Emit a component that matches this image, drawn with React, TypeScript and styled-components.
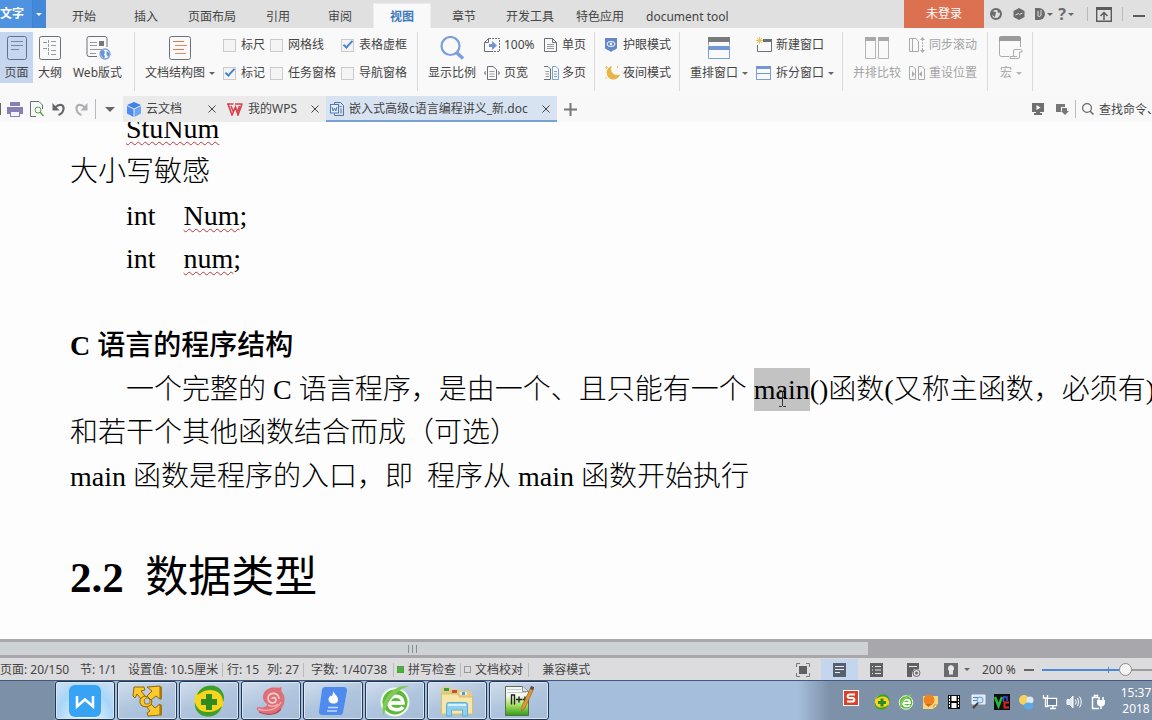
import React from 'react';
import styled, { createGlobalStyle, css } from 'styled-components';

const GlobalStyle = createGlobalStyle`
  *, *::before, *::after { box-sizing: border-box; }
  html, body { margin: 0; padding: 0; }
  body {
    font-family: "Noto Sans", "Noto Sans CJK SC", sans-serif;
    font-size: 12px;
    line-height: 16px;
    color: #444;
    overflow: hidden;
  }
  button, input { font: inherit; color: inherit; }
  button { border: 0; padding: 0; background: none; white-space: nowrap; }
  svg { display: block; flex: none; }
`;

const Window = styled.div`
  display: flex;
  flex-direction: column;
  height: 100vh;
  overflow: hidden;
  background: #f9f9f9;
`;

/* ---------- title bar ---------- */

const TitleBar = styled.header`
  display: flex;
  flex: none;
  height: 28px;
  background: #e0e0e1;
`;

const AppButton = styled.button`
  display: flex;
  align-items: center;
  width: 46px;
  margin-right: 5px;
  background: linear-gradient(90deg, #4f92e0 32px, #3f82d2 32px, #4489d8 34px);
  color: #fff;
  font-weight: 700;
  overflow: hidden;
`;

const AppName = styled.span`
  width: 36px;
  text-align: left;
`;

const TabNav = styled.nav`
  display: flex;
  align-items: flex-end;
  gap: 4px;
  padding-left: 4px;
`;

const MenuTab = styled.button<{ $active?: boolean }>`
  height: 25px;
  min-width: 58px;
  padding: 2px 9px 0;
  color: #444;
  ${(p) =>
    p.$active &&
    css`
      background: #f9f9f9;
      border: 1px solid #ececec;
      border-bottom: 0;
      color: #3d78bd;
      font-weight: 700;
    `}
`;

const TitleActions = styled.div`
  display: flex;
  align-items: center;
  margin-left: auto;
  height: 28px;
  padding-right: 7px;
`;

const LoginButton = styled.button`
  width: 80px;
  height: 28px;
  margin-right: 5px;
  background: #dc7152;
  color: #fff;
`;

const TitleIcon = styled.button<{ $w?: number }>`
  display: flex;
  align-items: center;
  justify-content: center;
  gap: 2px;
  width: ${(p) => p.$w ?? 24}px;
  height: 24px;
  color: #6a6b6d;
  font-weight: 700;
  font-size: 16px;
`;

const Divider = styled.span<{ $h?: number; $gap?: number }>`
  flex: none;
  width: 1px;
  height: ${(p) => p.$h ?? 14}px;
  margin: 0 ${(p) => p.$gap ?? 4}px;
  background: #b9babc;
`;

/* ---------- ribbon ---------- */

const Ribbon = styled.section`
  display: flex;
  flex: none;
  padding: 4px 0 5px;
  overflow: hidden;
`;

const Group = styled.div<{ $pad?: string }>`
  display: flex;
  flex: none;
  gap: 8px;
  height: 59px;
  padding: ${(p) => p.$pad ?? '0 8px 0 10px'};
  border-right: 1px solid #dadada;
`;

const ViewButtons = styled.div`
  display: flex;
`;

const BigButton = styled.button<{ $w: number; $active?: boolean; $muted?: boolean }>`
  display: flex;
  flex-direction: column;
  align-items: center;
  gap: 5px;
  width: ${(p) => p.$w}px;
  height: 51px;
  padding-top: 4px;
  background: ${(p) => (p.$active ? '#c6d6ee' : 'transparent')};
  color: ${(p) => (p.$muted ? '#a3a3a3' : '#444')};
`;

const LabelLine = styled.span`
  display: flex;
  align-items: center;
  gap: 4px;
  line-height: 16px;
`;

const SmallGrid = styled.div<{ $cols: string }>`
  display: grid;
  grid-template-columns: ${(p) => p.$cols};
  grid-template-rows: 24px 24px;
  row-gap: 4px;
  padding-top: 1px;
`;

const SmallButton = styled.button<{ $slot: number; $muted?: boolean }>`
  display: grid;
  grid-template-columns: ${(p) => p.$slot}px auto;
  align-items: center;
  justify-content: start;
  text-align: left;
  color: ${(p) => (p.$muted ? '#a3a3a3' : '#444')};
`;

const CheckLabel = styled.label`
  display: flex;
  align-items: center;
  gap: 5px;
  white-space: nowrap;
`;

const CheckBox = styled.input`
  appearance: none;
  display: grid;
  place-items: center;
  flex: none;
  width: 13px;
  height: 13px;
  margin: 0;
  border: 1px solid #cbcbcb;
  background: #f4f4f4;
  &:checked::after {
    content: '';
    width: 10px;
    height: 5px;
    margin-bottom: 3px;
    border: solid #4285d6;
    border-width: 0 0 2px 2px;
    transform: rotate(-47deg);
  }
`;

const Caret = styled.span<{ $size?: number; $color?: string }>`
  flex: none;
  border: ${(p) => p.$size ?? 3}px solid transparent;
  border-top-color: ${(p) => p.$color ?? '#666'};
  border-bottom: 0;
`;

/* ---------- quick access and document tabs ---------- */

const QuickBar = styled.div`
  display: flex;
  align-items: center;
  flex: none;
  height: 26px;
  background: #f8f8f8;
`;

const QuickTools = styled.div`
  display: flex;
  align-items: center;
  width: 123px;
  overflow: hidden;
`;

const QuickButton = styled.button<{ $w?: number }>`
  display: flex;
  align-items: center;
  justify-content: center;
  flex: none;
  width: ${(p) => p.$w ?? 22}px;
  height: 24px;
`;

const DocTab = styled.div<{ $w: number; $active?: boolean }>`
  display: flex;
  align-items: center;
  gap: 5px;
  width: ${(p) => p.$w}px;
  height: 26px;
  padding: 2px 5px 0 4px;
  border-bottom: 2px solid ${(p) => (p.$active ? '#7a9fd2' : '#ebebec')};
  background: ${(p) => (p.$active ? '#d8e3f1' : '#ebebec')};
  white-space: nowrap;
`;

const DocTabName = styled.button`
  flex: 1;
  text-align: left;
`;

const CloseButton = styled.button`
  display: flex;
  padding: 2px;
`;

const QuickRight = styled.div`
  display: flex;
  align-items: center;
  margin-left: auto;
`;

const SearchLabel = styled.label`
  display: flex;
  align-items: center;
  gap: 5px;
  padding-left: 2px;
`;

const SearchInput = styled.input`
  width: 53px;
  height: 20px;
  padding: 0;
  border: 0;
  outline: 0;
  background: transparent;
  &::placeholder {
    color: #444;
    opacity: 1;
  }
`;

/* ---------- document ---------- */

const Page = styled.main`
  flex: 1;
  min-height: 0;
  overflow: hidden;
  padding-left: 70px;
  background: #fdfdfd;
  color: #000;
  font-family: "Liberation Serif", "Noto Sans CJK SC", serif;
  font-size: 28px;
  font-weight: 300;
  line-height: 43px;
  white-space: pre;
`;

const Content = styled.article`
  margin-top: -15px;
`;

const Para = styled.p<{ $indent?: boolean }>`
  height: 43px;
  margin: 0;
  padding-left: ${(p) => (p.$indent ? 56 : 0)}px;
`;

const Section = styled.section`
  padding-top: 1px;
`;

const SubHeading = styled.h3`
  margin: 44px 0 1px;
  height: 43px;
  font-size: 28px;
  font-weight: 500;
  b { font-weight: 700; }
`;

const Heading = styled.h2`
  margin: 48px 0 0;
  font-size: 43px;
  line-height: 64px;
  font-weight: 400;
  b { font-weight: 700; }
`;

const Misspelled = styled.span`
  text-decoration: underline wavy #b8383c 1px;
  text-decoration-skip-ink: none;
  text-underline-offset: 3px;
`;

const Selection = styled.mark`
  position: relative;
  display: inline-block;
  height: 43px;
  vertical-align: top;
  background: #c3c3c3;
  color: #000;
`;

const Pointer = styled.svg`
  position: absolute;
  left: 25px;
  top: 22px;
`;

/* ---------- scroll and status bars ---------- */

const ScrollTrack = styled.div`
  flex: none;
  height: 19px;
  padding: 3px 0;
  background: #a8a8ac;
`;

const ScrollThumb = styled.div`
  display: flex;
  align-items: center;
  justify-content: center;
  gap: 3px;
  width: calc(100% - 284px);
  height: 13px;
  padding-right: 44px;
  background: #cfd2d4;
`;

const Grip = styled.span`
  width: 1px;
  height: 8px;
  background: #8b8d90;
`;

const StatusBar = styled.footer`
  display: flex;
  align-items: center;
  flex: none;
  height: 23px;
  padding-top: 1px;
  border-bottom: 1px solid #3f5a7d;
  background: #dcdbde;
  white-space: nowrap;
`;

const StatusItem = styled.span<{ $w: number }>`
  display: flex;
  align-items: center;
  gap: 4px;
  flex: none;
  width: ${(p) => p.$w}px;
`;

const StatusDot = styled.span<{ $on?: boolean }>`
  width: 7px;
  height: 7px;
  border: 1px solid ${(p) => (p.$on ? '#4aa53c' : '#999')};
  background: ${(p) => (p.$on ? '#4fae40' : 'transparent')};
`;

const StatusRight = styled.div`
  display: flex;
  align-items: center;
  margin-left: auto;
`;

const ViewMode = styled.button<{ $active?: boolean; $w?: number }>`
  display: flex;
  align-items: center;
  justify-content: center;
  gap: 6px;
  width: ${(p) => p.$w ?? 37}px;
  height: 21px;
  background: ${(p) => (p.$active ? '#c4d5ee' : 'transparent')};
`;

const ZoomValue = styled.span`
  width: 42px;
`;

const ZoomSlider = styled.input`
  appearance: none;
  width: 110px;
  height: 14px;
  margin: 0 0 0 8px;
  background:
    linear-gradient(#4a8ad6, #4a8ad6) 66px 4px / 1px 6px no-repeat,
    linear-gradient(90deg, #4a8ad6 80px, #9c9ca0 80px) 0 6px / 100% 2px no-repeat;
  &::-webkit-slider-thumb {
    appearance: none;
    width: 13px;
    height: 13px;
    border: 1px solid #8b8b8e;
    border-radius: 50%;
    background: #f4f4f4;
  }
`;

/* ---------- taskbar ---------- */

const Taskbar = styled.nav`
  display: flex;
  flex: none;
  height: 39px;
  background: linear-gradient(90deg, #7c90a7 54px, #a5bedb 56px, #a5bedb calc(100% - 354px), #7d91a8 calc(100% - 322px));
`;

const TaskButtons = styled.div`
  display: flex;
  gap: 2px;
  padding-left: 55px;
`;

const TaskButton = styled.button<{ $active?: boolean }>`
  display: flex;
  align-items: center;
  justify-content: center;
  width: 60px;
  height: 39px;
  border: 1px solid #22364f;
  border-radius: 3px;
  box-shadow: inset 0 0 0 1px #dbe6f3;
  background: ${(p) =>
    p.$active
      ? 'radial-gradient(circle at 50% 100%, #eaf8ff 10%, #a9d4f6 60%, #cfe2f6)'
      : 'linear-gradient(160deg, #cbd9ea 10%, #b0c5de 50%, #a5bcd8)'};
`;

const Tray = styled.div`
  display: flex;
  align-items: center;
  margin-left: auto;
`;

const TrayIcon = styled.button<{ $raised?: boolean }>`
  display: flex;
  align-items: center;
  justify-content: center;
  width: ${(p) => (p.$raised ? 38 : 24)}px;
  height: 24px;
  margin-bottom: ${(p) => (p.$raised ? 5 : 0)}px;
  margin-top: ${(p) => (p.$raised ? 0 : 2)}px;
`;

const Clock = styled.time`
  width: 42px;
  padding-left: 10px;
  color: #fff;
  text-align: center;
`;

/* ---------- icons ---------- */

const Svg = ({ w, h = w, children }: { w: number; h?: number; children: React.ReactNode }) => (
  <svg width={w} height={h} viewBox={`0 0 ${w} ${h}`} fill="none" aria-hidden="true">
    {children}
  </svg>
);

const G = '#6b7078';
const B = '#7a9fdb';

const PageIcon = () => (
  <Svg w={20} h={24}>
    <rect x=".5" y=".5" width="19" height="23" rx="2" stroke="#5f7390" />
    <path d="M4 5.500h12M4 9.500h12M4 13.500h8" stroke="#7489a8" />
  </Svg>
);
const OutlineIcon = () => (
  <Svg w={22} h={24}>
    <rect x=".5" y=".5" width="21" height="23" rx="2" stroke={G} />
    <path d="M9.500 4v15" stroke="#999" strokeDasharray="3 1" />
    <path d="M4 6.500h4M4 12.500h4M12 5.500h5M12 9.500h5M12 14.500h5M12 18.500h5" stroke="#999" />
  </Svg>
);
const WebIcon = () => (
  <Svg w={26} h={24}>
    <path d="M12 20.500H4a2 2 0 0 1-2-2V2.500a2 2 0 0 1 2-2h16a2 2 0 0 1 2 2V11" stroke={G} />
    <path d="M5 6.500h7M5 9.500h7M5 13.500h12M5 17.500h6" stroke="#999" />
    <rect x="14" y="5" width="5" height="5" fill="#777" />
    <circle cx="20" cy="18" r="5" fill="#f4f8ff" stroke={B} strokeWidth="1.300" />
    <path d="M15.500 15.500l3-1.500 1.500 2-1 2.500 1 2-1 2-3-3zM21.500 15l3 2-1 4-2-2z" fill="#6b93d2" />
  </Svg>
);
const MapIcon = () => (
  <Svg w={22} h={24}>
    <rect x=".5" y=".5" width="21" height="23" rx="2" stroke={G} />
    <path d="M4 5.500h11M4 13.500h11" stroke="#d97b4c" />
    <path d="M6 9.500h12M6 17.500h11" stroke="#d98e68" />
  </Svg>
);
const MagnifierIcon = () => (
  <Svg w={26} h={24}>
    <circle cx="11.500" cy="10" r="9" stroke={B} strokeWidth="2.200" />
    <path d="M17.500 16.500l6.500 6" stroke={B} strokeWidth="3.500" />
  </Svg>
);
const ActualSizeIcon = () => (
  <Svg w={17} h={16}>
    <path d="M7 1.500H4.500L.5 5.500v9H7" stroke={G} />
    <path d="M.5 5.500h4v-4" stroke={G} />
    <path d="M8 1.500h7.500v13H7" stroke={G} strokeDasharray="2 1" />
    <path d="M5 7h3V4L13 8.500 8 13v-3H5z" fill="#6f95d6" />
  </Svg>
);
const PageWidthIcon = () => (
  <Svg w={17} h={16}>
    <path d="M3.500 1.500H9l3.500 3v10h-9z" stroke={G} />
    <path d="M5.500 6.500h5M5.500 9h5M5.500 11.500h5" stroke="#999" />
    <path d="M1.500 6v4L0 8zM14.500 6v4L16 8z" fill="#888" stroke="#888" strokeWidth=".5" />
  </Svg>
);
const SinglePageIcon = () => (
  <Svg w={14} h={16}>
    <path d="M.5 1.500h8l4 4v9H.5zM8.500 1.500v4h4" stroke={G} />
    <path d="M3 7.500h7M3 9.500h7M3 11.500h7" stroke="#999" />
  </Svg>
);
const MultiPageIcon = () => (
  <Svg w={16} h={16}>
    <path d="M-.5 1.500H4L6.500 4v10.500h-7" stroke={G} />
    <path d="M8.500 1.500H12l2.500 2.500v10.500h-6z" stroke={B} />
    <path d="M1.500 6.500H5M1.500 9H5M1.500 11.500H5" stroke="#999" />
    <path d="M10 6.500h3M10 9h3M10 11.500h3" stroke={B} />
  </Svg>
);
const EyeShieldIcon = () => (
  <Svg w={12} h={14}>
    <path d="M0 0h12v10c-1 2-3 1.500-6 4-3-2.500-5-2-6-4z" fill="#6488cc" />
    <ellipse cx="6" cy="6" rx="4" ry="2.500" stroke="#fff" />
    <circle cx="6" cy="6" r="1.200" fill="#fff" />
  </Svg>
);
const MoonIcon = () => (
  <Svg w={16} h={16}>
    <path d="M7 1a5.800 5.800 0 1 0 8 8.500A6.800 6.800 0 1 1 7 1z" fill="#ebb545" />
    <path d="M7 1C4 6 9 12 15 9.500 12 16 3 16 2 9 2 5 4 2 7 1z" fill="#ebb545" />
    <path d="M1.500 1v3M0 2.500h3M12.500 1v2M0 13.500l2-1" stroke="#f0c766" />
  </Svg>
);
const ArrangeIcon = () => (
  <Svg w={22} h={24}>
    <path d="M0 1h22v5H0z" fill="#7a7a7c" />
    <path d="M.5 6v3.500M21.500 6v3.500" stroke="#999" />
    <path d="M0 10h22v4H0z" fill="#7398d6" />
    <path d="M.5 14v8.500h21V14" stroke={B} />
  </Svg>
);
const NewWindowIcon = () => (
  <Svg w={17} h={16}>
    <path d="M1.500 8v6.500h14V3" stroke={G} />
    <path d="M7 2h9v3H7z" fill={G} />
    <path d="M3.500 0v7M0 3.500h7M1 1l5 5M6 1L1 6" stroke="#edc15d" />
  </Svg>
);
const SplitWindowIcon = () => (
  <Svg w={15} h={16}>
    <rect x=".5" y="1.500" width="14" height="13" stroke={B} />
    <path d="M0 2.500h15" stroke="#7398d6" strokeWidth="3" />
    <path d="M0 8.500h15" stroke="#7398d6" />
  </Svg>
);
const SideBySideIcon = () => (
  <Svg w={24} h={24}>
    <path d="M.5 1.500h10v21H.5zM13.500 1.500h10v21h-10z" stroke="#b5b5b5" />
    <path d="M0 1h11v4H0zM13 1h11v4H13z" fill="#a8a8a8" />
  </Svg>
);
const SyncScrollIcon = () => (
  <Svg w={16} h={16}>
    <path d="M4.500 14.500h-4v-13H4" stroke="#ababab" />
    <path d="M3.500 1.500H7l2.500 3v10h-6z" stroke="#ababab" />
    <path d="M13.500 2v12" stroke="#ababab" strokeDasharray="2 1" />
    <path d="M13.500 0L16 3h-5zM13.500 16l2.500-3h-5z" fill="#ababab" />
  </Svg>
);
const ResetIcon = () => (
  <Svg w={16} h={16}>
    <path d="M.5 1.500H4L6.500 4v10.500h-6zM9.500 1.500H13L15.500 4v10.500h-6z" stroke="#ababab" />
    <path d="M3 6v6l3-3zM13 6v6l-3-3z" fill="#ababab" />
  </Svg>
);
const MacroIcon = () => (
  <Svg w={24} h={24}>
    <path d="M10 20.500H2.500a2 2 0 0 1-2-2V2M21.500 2v9" stroke="#ababab" />
    <path d="M0 2a2 2 0 0 1 2-2h18a2 2 0 0 1 2 2v3H0z" fill="#9b9b9b" />
    <path d="M14.500 20v-5a1.500 1.500 0 0 1 1.500-1.500h5.500a1.500 1.500 0 0 1 1.500 1.500v1h-2.500v5a1.500 1.500 0 0 1-1.500 1.500h-8v-2h7" stroke="#ababab" fill="#f9f9f9" />
  </Svg>
);

const PrinterIcon = () => (
  <Svg w={16} h={15}>
    <path d="M3 0h10v4H3zM0 5h16v7h-3V9H3v3H0z" fill="#8780b5" />
    <rect x="3.500" y="9.500" width="9" height="5" fill="#f3f3f8" stroke="#8780b5" />
  </Svg>
);
const PreviewIcon = () => (
  <Svg w={14} h={16}>
    <path d="M6 15.500H.5V.5H9L12.500 4v4" stroke={G} />
    <circle cx="8" cy="9" r="3" stroke="#5aa24e" />
    <path d="M10 11l3.500 4" stroke="#5aa24e" strokeWidth="1.500" />
  </Svg>
);
const UndoIcon = ({ flip, color }: { flip?: boolean; color: string }) => (
  <Svg w={14} h={14}>
    <g transform={flip ? 'matrix(-1 0 0 1 14 0)' : undefined}>
      <path d="M3 5.500C8 1 12 3 11.500 7c-.3 3-2.500 5-5 6" stroke={color} strokeWidth="2.200" />
      <path d="M.5 1v7.500h7z" fill={color} />
    </g>
  </Svg>
);
const CubeIcon = () => (
  <Svg w={14} h={15}>
    <path d="M7 0l7 3-7 3.500L0 3z" fill="#3f82ea" />
    <path d="M0 4l6.500 3.200V15L0 11.500z" fill="#4b8df0" />
    <path d="M14 4L7.500 7.200V15L14 11.500z" fill="#6ca5f6" />
  </Svg>
);
const WpsIcon = () => (
  <Svg w={16} h={13}>
    <path d="M0 1h6.500M1 1l4 11 3.500-8 2.500 8 4-11M8 1h7.500M4 3l2.500 6M12.500 3L10.500 8.500" stroke="#d9424a" strokeWidth="1.600" />
  </Svg>
);
const DocIcon = () => (
  <Svg w={14} h={15}>
    <path d="M4.500 2V.5h6L13.500 3.500v10h-9v-2" stroke="#5a7396" />
    <path d="M11 6.500v5M9.500 4.500h2" stroke="#5a7396" />
    <rect x=".5" y="2.500" width="8" height="8.500" fill="#e6eefa" stroke="#4f78b6" />
    <path d="M2 5l1.200 4L4.500 6l1.300 3L7 5" stroke="#4f78b6" />
  </Svg>
);
const CloseIcon = () => (
  <Svg w={8}>
    <path d="M.5.5l7 7M7.500.5l-7 7" stroke="#444" />
  </Svg>
);
const PlusIcon = () => (
  <Svg w={13}>
    <path d="M6.500 0v13M0 6.500h13" stroke="#777" strokeWidth="2" />
  </Svg>
);
const PresentIcon = () => (
  <Svg w={12} h={12}>
    <path d="M0 0h12v9H8v1h2v2H2v-2h2V9H0z" fill="#707072" />
    <path d="M4.500 2v5L8.500 4.500z" fill="#fff" />
  </Svg>
);
const LayoutIcon = () => (
  <Svg w={13} h={12}>
    <path d="M0 1h9v3H5v5H0z" fill="#77777a" />
    <path d="M6 5h5v3h2l-4 4-4-4h1z" fill="#77777a" />
  </Svg>
);
const SearchIcon = () => (
  <Svg w={12}>
    <circle cx="5" cy="5" r="4.400" stroke="#666" strokeWidth="1.200" />
    <path d="M8 8l3.500 3.500" stroke="#666" strokeWidth="1.500" />
  </Svg>
);

const WAppIcon = () => (
  <Svg w={32}>
    <rect width="32" height="32" rx="6" fill="#36a3f4" />
    <path d="M8 11v10.500l8-7 8 7V11" stroke="#fff" strokeWidth="2.500" />
  </Svg>
);
const ArrowsAppIcon = () => (
  <Svg w={32}>
    <g stroke="#8f6606" strokeWidth="1" fill="#fbc92b">
      <path d="M3 2h10l1 3-4 1 4 5-4 3-4-5-2 4-2-2z" />
      <path d="M16 2l13-1v13l-4-3-5 4-4-4 5-5z" />
      <path d="M15 21l4-3 5 5 5-4v11l-12 1-1-3 3-2z" />
      <path d="M9 14l4-3 4 1 4 4-1 4-4 2-5-1-2-3z" />
    </g>
    <path d="M29 1l2 1v12l-2 1zM29 19l2 1v10l-2 1z" fill="#a87908" />
    <path d="M13 15l2-2h2l2 2v3l-2 1h-3z" fill="#b8cbe1" stroke="#8f6606" strokeWidth=".8" />
  </Svg>
);
const SafeAppIcon = ({ s = 32 }: { s?: number }) => (
  <svg width={s} height={s} viewBox="0 0 32 32" aria-hidden="true">
    <circle cx="16" cy="16" r="14.500" fill="#f7d41d" />
    <path d="M4 10C8-1 23-2 28 5c3 4 4 8 2 12C30 9 24 5 17 5 11 5 8 8 4 10z" fill="#3f9f2e" />
    <path d="M2 17c1 6 6 10 12 10 7 0 11-2 15-6-2 8-9 11-15 10.500C6 31 1 25 2 17z" fill="#3f9f2e" />
    <path d="M13 9h6v5h5v6h-5v5h-6v-5H8v-6h5z" fill="#2f8a1f" />
  </svg>
);
const ShellAppIcon = () => (
  <Svg w={32}>
    <path d="M27 2c-1 2-1 3 0 5 4 5 3 12-1 17-5 6-17 7-24 1-1-2 0-3 2-3 4 1 8 0 8-3-6-4-5-12 1-15 5-3 10 0 14-2z" fill="#dd7076" />
    <path d="M24 14c0-8-12-7-11 0 1 5 8 5 8 1 0-3-4-3-4-1" stroke="#f9cfd0" strokeWidth="1.600" />
    <path d="M3 24c9 3 19 1 23-7M13 20c4 2 8 1 10-1" stroke="#f2adb0" strokeWidth="1.400" />
    <path d="M4 27c8 4 17 3 22-3" stroke="#b8444c" strokeWidth="1.200" />
  </Svg>
);
const FlameAppIcon = () => (
  <Svg w={30} h={30}>
    <path d="M7 1h19a3 3 0 0 1 3 3.500l-4 22a3 3 0 0 1-3 2.500H4a3 3 0 0 1-3-3.500l3-22A3 3 0 0 1 7 1z" fill="#4f8bee" />
    <path d="M15 5c1 3 5 5 5 8.500s-2 4-4.500 4-5-1-5-4c0-2 1.500-3 2-4l1 1c1.500-1.500 1.500-3.500 1.500-5.500z" fill="#fff" />
    <path d="M10 21.500h10M9 25h10" stroke="#c7dcff" strokeWidth="1.500" />
  </Svg>
);
const BrowserIcon = ({ s = 32 }: { s?: number }) => (
  <svg width={s} height={s} viewBox="0 0 32 32" fill="none" aria-hidden="true">
    <circle cx="16" cy="17" r="13.500" fill="#5dba38" stroke="#f1faec" strokeWidth="2" />
    <path d="M10 18h14c0-9-14-9-14 0 0 8 11 8 14 4" stroke="#fff" strokeWidth="3.600" />
    <path d="M5 31C-1 20 12-1 30 1 20 4 8 13 5 31z" fill="#7fcb59" />
    <path d="M10 18h14" stroke="#fff" strokeWidth="3" />
  </svg>
);
const FolderAppIcon = () => (
  <Svg w={34} h={32}>
    <path d="M1 5l1-3h7l2 2h7l2 2h11l1 3v20H1z" fill="#e6cc80" />
    <path d="M4 3h5v3H4z" fill="#3e9b45" />
    <path d="M12 5h5v3h-5z" fill="#c3523a" />
    <path d="M20 7h7v3h-7z" fill="#e8eef4" />
    <path d="M22 7h3v3h-3z" fill="#5c9ccc" />
    <path d="M1.500 9h16l2 3h13v17h-31z" fill="#f6e6ab" stroke="#d9bf6c" />
    <path d="M6.500 31V19.500q0-2 2-2h17q2 0 2 2V31h-5v-6h-11v6z" fill="#8fd0ee" stroke="#5aaed6" />
    <path d="M8 20h18" stroke="#d5f0fb" strokeWidth="2" />
  </Svg>
);
const NotepadAppIcon = () => (
  <Svg w={30} h={32}>
    <defs>
      <linearGradient id="note" x1="0" y1="0" x2="0" y2="1">
        <stop offset=".3" stopColor="#f6f9f1" />
        <stop offset=".65" stopColor="#a5dc5e" />
        <stop offset="1" stopColor="#2f9a18" />
      </linearGradient>
    </defs>
    <path d="M1.500 1.500h17l6 5v24h-23z" fill="url(#note)" stroke="#5d6b55" />
    <path d="M18.500 1.500v5h6" fill="#dfe5ea" stroke="#8a9499" />
    <path d="M3 4.500h14M3 7.500h19" stroke="#c3cbd4" />
    <path d="M7.500 19.500V10h3v9.500M12 14.500h6M15 11.500v6M18.500 14.500h5M21 11.500v6" stroke="#222" strokeWidth="1.400" />
    <path d="M27 2l3 1-9 20-3.500 3 .5-5z" fill="#dc9a34" stroke="#8c5c20" strokeWidth=".6" />
    <path d="M27 1l3 1-1 3-3-1z" fill="#5a4a58" />
  </Svg>
);

/* ---------- data ---------- */

const menuTabs = ['开始', '插入', '页面布局', '引用', '审阅', '视图', '章节', '开发工具', '特色应用', 'document tool'];

const checks = [
  { label: '标尺', on: false },
  { label: '网格线', on: false },
  { label: '表格虚框', on: true },
  { label: '标记', on: true },
  { label: '任务窗格', on: false },
  { label: '导航窗格', on: false },
];

const tasks = [
  { name: 'WPS 文字', icon: <WAppIcon /> },
  { name: 'VMware', icon: <ArrowsAppIcon /> },
  { name: '360 安全卫士', icon: <SafeAppIcon /> },
  { name: 'Xshell', icon: <ShellAppIcon /> },
  { name: '笔记', icon: <FlameAppIcon /> },
  { name: '浏览器', icon: <BrowserIcon /> },
  { name: '资源管理器', icon: <FolderAppIcon /> },
  { name: 'Notepad++', icon: <NotepadAppIcon /> },
];

const trayIcons = [
  { name: '安全卫士', icon: <SafeAppIcon s={16} /> },
  { name: '浏览器', icon: <BrowserIcon s={16} /> },
  {
    name: '消息',
    icon: (
      <Svg w={16}>
        <path d="M1 2h15v9l-4 4H1z" fill="#f6d77c" />
        <path d="M16 11l-4 4v-4z" fill="#fff3c4" stroke="#8c6a1c" strokeWidth=".6" />
        <circle cx="7" cy="6" r="5.500" fill="#ec8426" />
        <path d="M3 10h7l-3.500 3z" fill="#d9661b" />
      </Svg>
    ),
  },
  {
    name: '视频',
    icon: (
      <Svg w={12} h={14}>
        <path d="M0 0h12v14H0z" fill="#111" />
        <path d="M3.500 1h5v5h-5zM3.500 8h5v5h-5z" fill="#fff" />
        <path d="M1.500 1v12M10.500 1v12" stroke="#fff" strokeDasharray="2 1" />
      </Svg>
    ),
  },
  {
    name: '搜索',
    icon: (
      <Svg w={15} h={15}>
        <path d="M1 1h13v9H1z" fill="#dce9f5" stroke="#eef" />
        <path d="M2 3.500h5M2 6.500h4" stroke="#4c86c4" />
        <circle cx="9" cy="6" r="3" fill="#cfe6fa" stroke="#6f9cc8" />
        <path d="M7 9l-5 5" stroke="#4a3a2c" strokeWidth="2" />
      </Svg>
    ),
  },
  {
    name: 'VNC',
    icon: (
      <Svg w={16}>
        <path d="M0 0h16v16H0z" fill="#101010" />
        <path d="M1 3l3.500 9L8 3" stroke="#28b83a" strokeWidth="2.500" />
        <path d="M9.500 8V3h3.500v4" stroke="#3a52d8" strokeWidth="1.500" />
        <path d="M15 8.500h-4.500v5H15" stroke="#d22" strokeWidth="2" />
      </Svg>
    ),
  },
  {
    name: '天气',
    icon: (
      <Svg w={16}>
        <circle cx="6" cy="6" r="5" fill="#f6d25c" />
        <circle cx="12" cy="6" r="3.500" fill="#dbe9f5" />
        <ellipse cx="10.500" cy="12" rx="5" ry="3.500" fill="#5aa9e8" />
      </Svg>
    ),
  },
  {
    name: '网络',
    icon: (
      <Svg w={16}>
        <path d="M5.500 4.500h9v7h-9zM8 14.500h6M11 12v2" stroke="#fff" strokeWidth="1.300" />
        <path d="M6 5h8v6H6z" fill="#6c8199" />
        <path d="M1.500 1v3h4V1M3.500 4v8.500h3" stroke="#fff" strokeWidth="1.300" />
      </Svg>
    ),
  },
  {
    name: '音量',
    icon: (
      <Svg w={16}>
        <path d="M1 5.500h2.500L7 2v12L3.500 10.500H1z" fill="#dfe6ee" stroke="#fff" />
        <path d="M9.500 5.500q1.500 2.500 0 5M11.500 4q2.500 4 0 8M13.500 2.500q3.500 5.500 0 11" stroke="#fff" />
      </Svg>
    ),
  },
  {
    name: '电源',
    icon: (
      <Svg w={16}>
        <path d="M9 14.500H2.500v-11H8M4.500 3.500v-2h3v2" stroke="#fff" strokeWidth="1.500" />
        <path d="M7 6h8v2.500a4 4 0 0 1-8 0z" fill="#fff" />
        <path d="M9 6V3M13 6V3M11 11v4" stroke="#fff" strokeWidth="1.500" />
      </Svg>
    ),
  },
];

/* ---------- page ---------- */

export default function App() {
  return (
    <Window>
      <GlobalStyle />
      <TitleBar>
        <AppButton>
          <AppName>文字</AppName>
          <Caret $color="#fff" />
        </AppButton>
        <TabNav>
          {menuTabs.map((t) => (
            <MenuTab key={t} $active={t === '视图'}>
              {t}
            </MenuTab>
          ))}
        </TabNav>
        <TitleActions>
          <LoginButton>未登录</LoginButton>
          <TitleIcon $w={14} aria-label="皮肤">
            <Svg w={12}>
              <circle cx="6" cy="6" r="5" stroke="#6a6b6d" strokeWidth="2" />
              <path d="M1 3l5 1-1 5-3-2zM7 1l4 3-3 1zM7 11l3-4 1 2z" fill="#6a6b6d" />
            </Svg>
          </TitleIcon>
          <TitleIcon $w={32} aria-label="服务">
            <Svg w={12}>
              <path d="M6 0l5.500 3v6L6 12 .5 9V3z" fill="#6a6b6d" />
              <path d="M2.500 7l3-1.500 1 1 3-1.500" stroke="#e0e0e1" />
            </Svg>
          </TitleIcon>
          <TitleIcon $w={18} aria-label="文档">
            <Svg w={10} h={12}>
              <path d="M0 0h4a6 6 0 0 1 0 12H0z" fill="#6a6b6d" />
              <path d="M3 3v5q2 2 3-1V2" stroke="#e0e0e1" />
            </Svg>
            <Caret />
          </TitleIcon>
          <TitleIcon $w={26} aria-label="帮助">
            ?<Caret />
          </TitleIcon>
          <Divider $gap={8} />
          <TitleIcon $w={16} aria-label="折叠功能区">
            <Svg w={16} h={15}>
              <path d="M.7 1v13.300h14.600V1" stroke="#5a5b5d" strokeWidth="1.400" />
              <path d="M0 0h16v3H0z" fill="#5a5b5d" />
              <path d="M8 5.500V13M4.500 9L8 5.500 11.500 9" stroke="#5a5b5d" strokeWidth="1.500" />
            </Svg>
          </TitleIcon>
          <Divider $gap={10} />
          <TitleIcon $w={12} aria-label="最小化">
            <Svg w={12} h={12}>
              <path d="M0 8h12" stroke="#5a5b5d" strokeWidth="2" />
            </Svg>
          </TitleIcon>
        </TitleActions>
      </TitleBar>

      <Ribbon>
        <Group $pad="0 6px 0 0">
          <ViewButtons>
            <BigButton $w={33} $active>
              <PageIcon />
              页面
            </BigButton>
            <BigButton $w={34}>
              <OutlineIcon />
              大纲
            </BigButton>
            <BigButton $w={61}>
              <WebIcon />
              Web版式
            </BigButton>
          </ViewButtons>
        </Group>
        <Group $pad="0 10px">
          <BigButton $w={70}>
            <MapIcon />
            <LabelLine>
              文档结构图
              <Caret />
            </LabelLine>
          </BigButton>
          <SmallGrid $cols="47px 71px 66px">
            {checks.map((c) => (
              <CheckLabel key={c.label}>
                <CheckBox type="checkbox" defaultChecked={c.on} />
                {c.label}
              </CheckLabel>
            ))}
          </SmallGrid>
        </Group>
        <Group>
          <BigButton $w={48}>
            <MagnifierIcon />
            显示比例
          </BigButton>
          <SmallGrid $cols="60px 42px">
            <SmallButton $slot={20}>
              <ActualSizeIcon />
              100%
            </SmallButton>
            <SmallButton $slot={18}>
              <SinglePageIcon />
              单页
            </SmallButton>
            <SmallButton $slot={20}>
              <PageWidthIcon />
              页宽
            </SmallButton>
            <SmallButton $slot={18}>
              <MultiPageIcon />
              多页
            </SmallButton>
          </SmallGrid>
        </Group>
        <Group>
          <SmallGrid $cols="66px">
            <SmallButton $slot={18}>
              <EyeShieldIcon />
              护眼模式
            </SmallButton>
            <SmallButton $slot={18}>
              <MoonIcon />
              夜间模式
            </SmallButton>
          </SmallGrid>
        </Group>
        <Group>
          <BigButton $w={58}>
            <ArrangeIcon />
            <LabelLine>
              重排窗口
              <Caret />
            </LabelLine>
          </BigButton>
          <SmallGrid $cols="78px">
            <SmallButton $slot={20}>
              <NewWindowIcon />
              新建窗口
            </SmallButton>
            <SmallButton $slot={20}>
              <SplitWindowIcon />
              <LabelLine>
                拆分窗口
                <Caret />
              </LabelLine>
            </SmallButton>
          </SmallGrid>
        </Group>
        <Group $pad="0 10px">
          <BigButton $w={48} $muted>
            <SideBySideIcon />
            并排比较
          </BigButton>
          <SmallGrid $cols="68px">
            <SmallButton $slot={20} $muted>
              <SyncScrollIcon />
              同步滚动
            </SmallButton>
            <SmallButton $slot={20} $muted>
              <ResetIcon />
              重设位置
            </SmallButton>
          </SmallGrid>
        </Group>
        <Group>
          <BigButton $w={26} $muted>
            <MacroIcon />
            <LabelLine>
              宏
              <Caret $color="#b5b5b5" />
            </LabelLine>
          </BigButton>
        </Group>
      </Ribbon>

      <QuickBar>
        <QuickTools>
          <QuickButton $w={4} aria-label="保存">
            <Svg w={4} h={12}>
              <path d="M0 0v12" stroke="#666" strokeWidth="2" />
            </Svg>
          </QuickButton>
          <QuickButton aria-label="打印">
            <PrinterIcon />
          </QuickButton>
          <QuickButton aria-label="打印预览">
            <PreviewIcon />
          </QuickButton>
          <QuickButton aria-label="撤销">
            <UndoIcon color="#65676a" />
          </QuickButton>
          <QuickButton aria-label="恢复">
            <UndoIcon flip color="#adafb2" />
          </QuickButton>
          <Divider $h={20} $gap={3} />
          <QuickButton aria-label="自定义">
            <Caret $size={5} />
          </QuickButton>
        </QuickTools>
        <DocTab $w={100}>
          <CubeIcon />
          <DocTabName>云文档</DocTabName>
          <CloseButton aria-label="关闭云文档">
            <CloseIcon />
          </CloseButton>
        </DocTab>
        <DocTab $w={103}>
          <WpsIcon />
          <DocTabName>我的WPS</DocTabName>
          <CloseButton aria-label="关闭我的WPS">
            <CloseIcon />
          </CloseButton>
        </DocTab>
        <DocTab $w={231} $active>
          <DocIcon />
          <DocTabName>嵌入式高级c语言编程讲义_新.doc</DocTabName>
          <CloseButton aria-label="关闭文档">
            <CloseIcon />
          </CloseButton>
        </DocTab>
        <QuickButton $w={26} aria-label="新建标签">
          <PlusIcon />
        </QuickButton>
        <QuickRight>
          <QuickButton $w={30} aria-label="放映">
            <PresentIcon />
          </QuickButton>
          <QuickButton $w={18} aria-label="布局">
            <LayoutIcon />
          </QuickButton>
          <Divider $h={18} />
          <SearchLabel>
            <SearchIcon />
            <SearchInput type="text" placeholder="查找命令、" aria-label="查找命令" />
          </SearchLabel>
        </QuickRight>
      </QuickBar>

      <Page>
        <Content>
          <Para $indent>
            <Misspelled>StuNum</Misspelled>
          </Para>
          <Para>大小写敏感</Para>
          <Section>
            <Para $indent>
              {'int    '}
              <Misspelled>Num</Misspelled>;
            </Para>
            <Para $indent>
              {'int    '}
              <Misspelled>num</Misspelled>;
            </Para>
          </Section>
          <SubHeading>
            <b>C</b>
            {' 语言的程序结构'}
          </SubHeading>
          <Para $indent>
            {'一个完整的 C 语言程序，是由一个、且只能有一个 '}
            <Selection>
              main
              <Pointer width="7" height="17" viewBox="0 0 7 17" fill="none" aria-hidden="true">
                <path d="M0 .5h2.500l1 1 1-1H7M3.500 1v14.500M0 16.500h2.500l1-1 1 1H7" stroke="#333" />
              </Pointer>
            </Selection>
            {'()函数(又称主函数，必须有)'}
          </Para>
          <Para>和若干个其他函数结合而成（可选）</Para>
          <Section>
            <Para>{'main 函数是程序的入口，即  程序从 main 函数开始执行'}</Para>
          </Section>
          <Heading>
            <b>2.2</b>
            {'  数据类型'}
          </Heading>
        </Content>
      </Page>

      <ScrollTrack>
        <ScrollThumb>
          <Grip />
          <Grip />
          <Grip />
        </ScrollThumb>
      </ScrollTrack>

      <StatusBar>
        <StatusItem $w={80}>页面: 20/150</StatusItem>
        <StatusItem $w={48}>节: 1/1</StatusItem>
        <StatusItem $w={90}>设置值: 10.5厘米</StatusItem>
        <Divider />
        <StatusItem $w={40}>行: 15</StatusItem>
        <StatusItem $w={32}>列: 27</StatusItem>
        <Divider />
        <StatusItem $w={82}>&nbsp;字数: 1/40738</StatusItem>
        <Divider $gap={3} />
        <StatusItem $w={60}>
          <StatusDot $on />
          拼写检查
        </StatusItem>
        <Divider $gap={3} />
        <StatusItem $w={60}>
          <StatusDot />
          文档校对
        </StatusItem>
        <Divider $gap={4} />
        <StatusItem $w={60}>&nbsp;&nbsp;&nbsp;兼容模式</StatusItem>
        <StatusRight>
          <ViewMode aria-label="全屏显示">
            <Svg w={14} h={14}>
              <path d="M3 3h8v8H3z" fill="#5f6063" />
              <path d="M.5 4V.5H4M10 .5h3.500V4M13.500 10v3.500H10M4 13.500H.5V10" stroke="#77787b" />
            </Svg>
          </ViewMode>
          <ViewMode $active aria-label="页面视图">
            <Svg w={13} h={14}>
              <path d="M0 0h13v14H0z" fill="#56606e" />
              <path d="M2 3.500h9M2 6.500h9M2 9.500h5" stroke="#e6ebf2" />
            </Svg>
          </ViewMode>
          <ViewMode aria-label="大纲视图">
            <Svg w={13} h={14}>
              <path d="M0 0h13v14H0z" fill="#5f6063" />
              <path d="M2 3.500h1M5 3.500h6M2 7h1M5 7h6M2 10.500h1M5 10.500h6" stroke="#e6e6e8" />
            </Svg>
          </ViewMode>
          <ViewMode aria-label="Web 版式视图">
            <Svg w={14} h={14}>
              <path d="M0 0h12v6H7l-2 4v4H0z" fill="#5f6063" />
              <path d="M2 3.500h8" stroke="#e6e6e8" />
              <circle cx="9.500" cy="10" r="3.500" stroke="#6c6d70" />
              <circle cx="9.500" cy="10" r="1.500" fill="#6c6d70" />
            </Svg>
          </ViewMode>
          <ViewMode $w={50} aria-label="护眼模式">
            <Svg w={14} h={14}>
              <path d="M0 0h14v14H0z" fill="#6a6b6e" />
              <path d="M7 2a3.500 3.500 0 0 1 2 6v3.500H5V8a3.500 3.500 0 0 1 2-6z" fill="#e6e6e8" />
            </Svg>
            <Caret />
          </ViewMode>
          <ZoomValue>200 %</ZoomValue>
          <ViewMode $w={10} aria-label="缩小">
            <Svg w={10} h={4}>
              <path d="M0 2h10" stroke="#666" strokeWidth="2" />
            </Svg>
          </ViewMode>
          <ZoomSlider type="range" min={0} max={100} defaultValue={79} aria-label="显示比例" />
        </StatusRight>
      </StatusBar>

      <Taskbar>
        <TaskButtons>
          {tasks.map((t, i) => (
            <TaskButton key={t.name} $active={i === 0} aria-label={t.name}>
              {t.icon}
            </TaskButton>
          ))}
        </TaskButtons>
        <Tray>
          <TrayIcon $raised aria-label="输入法">
            <Svg w={16}>
              <path d="M0 0h16v16H0z" fill="#fff" />
              <path d="M1 1h14v14H1z" fill="#da4127" />
              <path d="M12 4.500H6.500C4 4.500 4 7.700 6.500 7.900h3c2.500.3 2.500 3.600-.5 3.600H4" stroke="#fff" strokeWidth="2" />
            </Svg>
          </TrayIcon>
          {trayIcons.map((t) => (
            <TrayIcon key={t.name} aria-label={t.name}>
              {t.icon}
            </TrayIcon>
          ))}
          <Clock>
            15:37
            <br />
            2018
          </Clock>
        </Tray>
      </Taskbar>
    </Window>
  );
}
